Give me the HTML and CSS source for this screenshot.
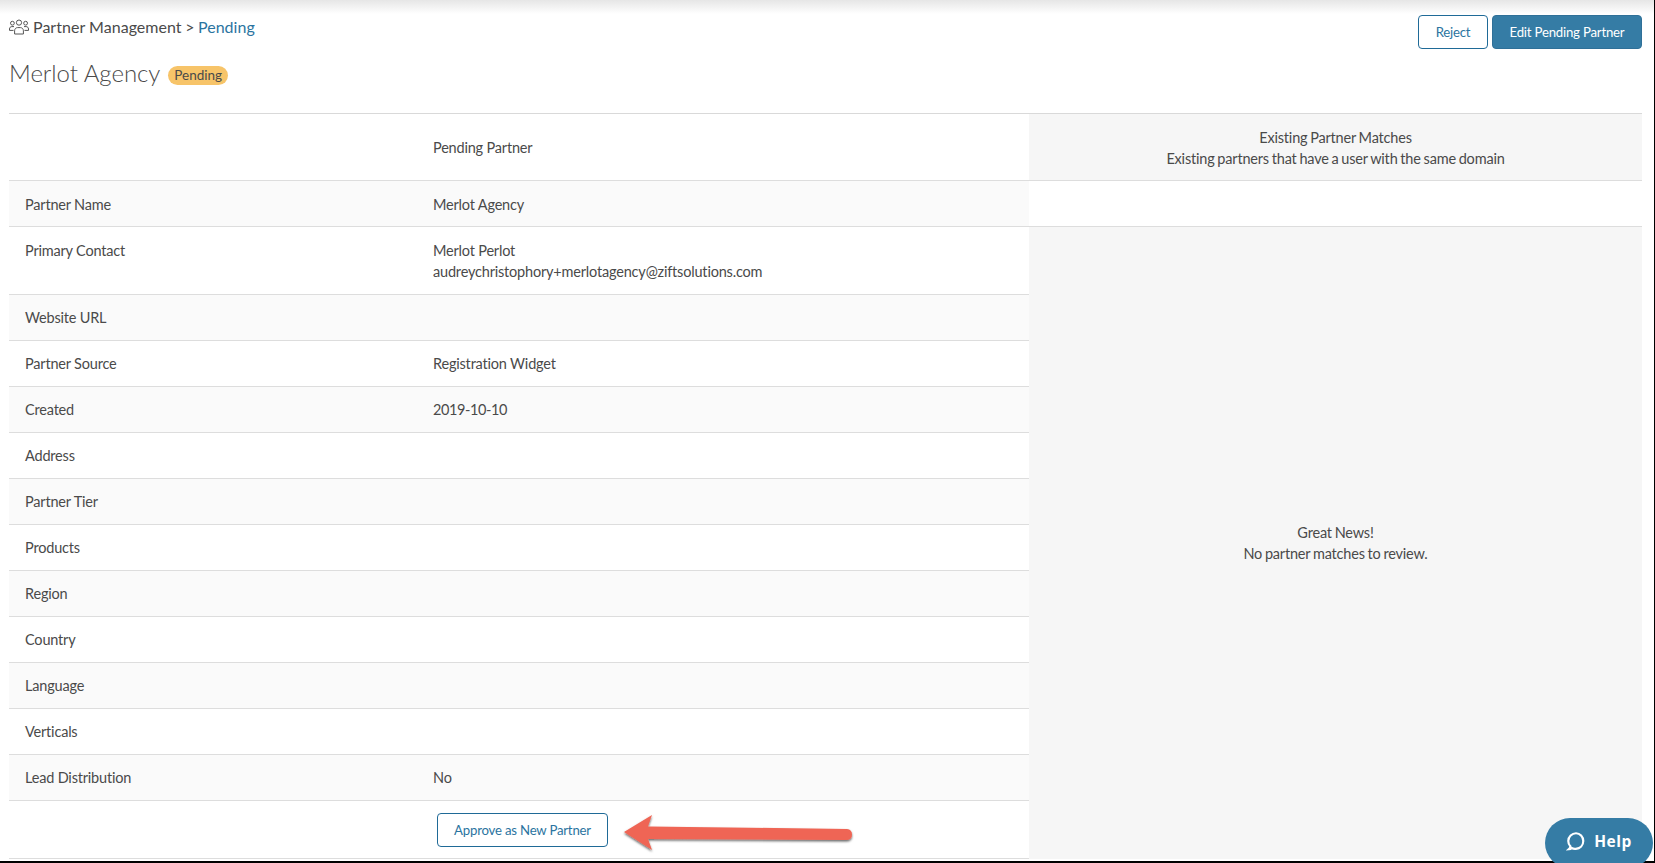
FILE: index.html
```html
<!DOCTYPE html>
<html lang="en">
<head>
<meta charset="utf-8">
<title>Merlot Agency - Pending</title>
<link rel="stylesheet" href="styles.css">
</head>
<body>
<div class="page">
  <header class="top">
    <div class="titles">
      <div class="crumbs">
        <svg class="crumb-icon" viewBox="0 0 20 16" width="20" height="16" fill="none" stroke="#555" stroke-width="1">
          <circle cx="10" cy="3.6" r="2.6"/>
          <circle cx="3.4" cy="4.2" r="1.9"/>
          <circle cx="16.6" cy="4.2" r="1.9"/>
          <path d="M5.6 15v-3.2c0-2 1.4-3.2 3-3.2h2.8c1.6 0 3 1.2 3 3.2V15z"/>
          <path d="M5 7.6H2.8C1.5 7.6.5 8.6.5 10v1.4h4"/>
          <path d="M15 7.6h2.2c1.3 0 2.3 1 2.3 2.4v1.4h-4"/>
        </svg>
        <span>Partner Management</span>
        <span class="sep">&gt;</span>
        <a class="crumb-link" href="#">Pending</a>
      </div>
      <div class="heading">
        <h1>Merlot Agency</h1>
        <span class="badge">Pending</span>
      </div>
    </div>
    <div class="actions">
      <button class="btn btn-outline btn-reject">Reject</button>
      <button class="btn btn-solid">Edit Pending Partner</button>
    </div>
  </header>

  <main class="board">
    <section class="details">
      <div class="row row-head"><div class="label"></div><div class="value">Pending Partner</div></div>
      <div class="row shade"><div class="label">Partner Name</div><div class="value">Merlot Agency</div></div>
      <div class="row row-tall"><div class="label">Primary Contact</div><div class="value">Merlot Perlot<br>audreychristophory+merlotagency@ziftsolutions.com</div></div>
      <div class="row shade"><div class="label">Website URL</div><div class="value"></div></div>
      <div class="row"><div class="label">Partner Source</div><div class="value">Registration Widget</div></div>
      <div class="row shade"><div class="label">Created</div><div class="value date">2019-10-10</div></div>
      <div class="row"><div class="label">Address</div><div class="value"></div></div>
      <div class="row shade"><div class="label">Partner Tier</div><div class="value"></div></div>
      <div class="row"><div class="label">Products</div><div class="value"></div></div>
      <div class="row shade"><div class="label">Region</div><div class="value"></div></div>
      <div class="row"><div class="label">Country</div><div class="value"></div></div>
      <div class="row shade"><div class="label">Language</div><div class="value"></div></div>
      <div class="row"><div class="label">Verticals</div><div class="value"></div></div>
      <div class="row shade"><div class="label">Lead Distribution</div><div class="value">No</div></div>
      <div class="row-action">
        <button class="btn btn-outline btn-approve">Approve as New Partner</button>
        <svg class="arrow" viewBox="0 0 240 44" width="240" height="44">
          <defs>
            <filter id="arrow-shadow" x="-5%" y="-20%" width="110%" height="150%">
              <feDropShadow dx="0" dy="1.5" stdDeviation="1.2" flood-color="#000" flood-opacity="0.6"/>
            </filter>
          </defs>
          <path filter="url(#arrow-shadow)" fill="#ef6555" d="M3 20 L31 3 L27 14.500 L226 17 Q231 17.500 231 22.500 Q231 27.500 226 28 L27 27 L31 38 Z"/>
        </svg>
      </div>
    </section>
    <aside class="matches">
      <div class="matches-head">Existing Partner Matches<br>Existing partners that have a user with the same domain</div>
      <div class="matches-gap"></div>
      <div class="matches-body">Great News!<br>No partner matches to review.</div>
    </aside>
  </main>
</div>
<button class="help">
  <svg viewBox="0 0 22 22" width="20" height="20" fill="none" stroke="#fff" stroke-width="2.4">
    <path d="M3.2 20c1.2-.1 2.300-.6 3-1.200 1.200.6 3 1 4.600.8 4.700-.4 8.200-3.800 8.200-8.500C19 6.300 15.400 2.500 11 2.500S2.500 6.300 2.500 11c0 2.400.9 4.400 2.300 5.900-.2 1.300-.8 2.400-1.600 3.100z"/>
  </svg>
  <span>Help</span>
</button>
</body>
</html>
```
FILE: styles.css
```css
* { box-sizing: border-box; }
html, body { margin: 0; padding: 0; height: 100%; overflow: hidden; background: #000; }
body { font-family: Lato, "Open Sans", sans-serif; font-size: 14.5px; letter-spacing: -.19px; line-height: 21px; color: #4a4a4a; position: relative; }
.page {
  width: 1654px; height: 861px; background: #fff; padding: 0 12px 0 9px; overflow: hidden;
  background-image: linear-gradient(#e6e6e6, #fff 14px);
}
.top { height: 113px; display: flex; justify-content: space-between; align-items: flex-start; }
.titles { padding-top: 16px; }
.crumbs { display: flex; align-items: center; height: 21px; font-size: 16px; letter-spacing: .03px; color: #4a4a4a; }
.crumb-icon { margin-right: 4px; }
.sep { margin: 0 3.5px; }
.crumb-link { color: #2b74a0; text-decoration: none; }
.heading { display: flex; align-items: center; margin-top: 20px; }
h1 { margin: 0; font-size: 24px; line-height: 32px; font-weight: 300; letter-spacing: -.03px; color: #4a4a4a; }
.badge { margin: 4px 0 0 8px; padding: 0 6px; height: 19px; line-height: 19px; border-radius: 10px; background: #f7c469; font-size: 13.5px; letter-spacing: 0; color: #4a4a4a; }
.actions { display: flex; gap: 4px; padding-top: 15px; }
.btn { font-family: inherit; font-size: 13.2px; letter-spacing: -.2px; height: 34px; border-radius: 4px; padding: 0; cursor: pointer; }
.btn-outline { background: #fff; border: 1px solid #1f6a97; color: #2b74a0; }
.btn-solid { background: #357ca5; border: 1px solid #2f7098; color: #fff; width: 150px; }
.btn-reject { width: 70px; }
.btn-approve { width: 171px; height: 34px; margin-top: 1.5px; }

.board { display: grid; grid-template-columns: 1020px 613px; height: 745px; border-top: 1px solid #d9d9d9; }
.row { display: grid; grid-template-columns: 424px 1fr; height: 46px; border-bottom: 1px solid #ddd; align-items: start; padding-top: 12.5px; }
.row .label { padding-left: 16px; }
.row-head { height: 67px; align-items: center; padding-top: 0; }
.row-tall { height: 67.5px; }
.date { letter-spacing: -.4px; }
.shade { background: #fafafa; }
.row-action { display: flex; align-items: center; height: 58.5px; padding-left: 428px; border-bottom: 1px solid #ddd; }
.arrow { margin-left: 13px; margin-top: 9px; }

.matches { display: flex; flex-direction: column; text-align: center; word-spacing: -.7px; }
.matches-head { height: 67px; background: #f6f6f6; border-bottom: 1px solid #ddd; padding-top: 13px; }
.matches-gap { height: 46px; background: #fff; border-bottom: 1px solid #ddd; }
.matches-body { flex: 1; background: #f6f6f6; display: flex; flex-direction: column; justify-content: center; }

.help {
  position: absolute; left: 1545px; top: 818px; width: 108px; height: 50px; border: 0; border-radius: 25px;
  background: #357ca5; color: #fff; font-family: "Open Sans", sans-serif; font-size: 15.5px; font-weight: 700; letter-spacing: .5px;
  display: flex; align-items: flex-start; justify-content: center; gap: 8px; padding: 13px 0 0;
}
.help span { line-height: 20px; }
```
